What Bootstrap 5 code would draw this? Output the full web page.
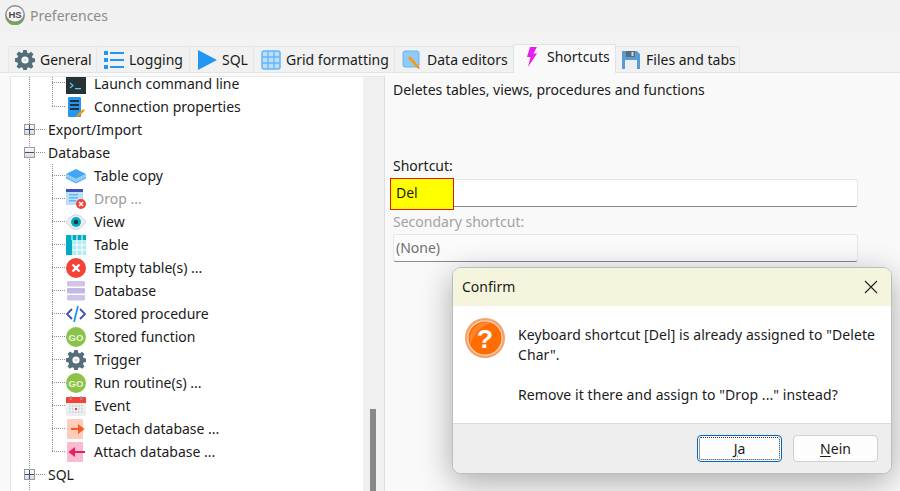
<!DOCTYPE html>
<html lang="en">
<head>
<meta charset="utf-8">
<title>Preferences</title>
<link href="https://cdn.jsdelivr.net/npm/bootstrap@5.3.0/dist/css/bootstrap.min.css" rel="stylesheet">
<style>
html,body{height:491px;overflow:hidden}
body{background:#f3f3f3;font-family:"Noto Sans","Open Sans",sans-serif;font-size:14px;color:#1b1b1b;line-height:20px;position:relative;width:900px}
.tbar{height:46px;padding:5px 0 0 5px;gap:5px;color:#8c8c8c;font-size:14px;background:linear-gradient(#f1f1f1 0,#f1f1f1 32px,#f3f3f3 34px)}
.tbar span{margin-top:1px}
.tabrow{height:26px;padding-left:8px;flex-wrap:nowrap;border:0}
.tabrow .nav-link{height:26px;border:1px solid #e6e6e6;border-bottom:0;border-radius:2px 2px 0 0;margin:0;padding:0 0 0 7px;color:#1b1b1b;background:#f1f1f1;display:flex;align-items:center;gap:5px;font-size:14px;line-height:20px;margin-right:-1px}
.tabrow .nav-link.active{height:29px;margin-top:-2px;background:#f9f9f9;border-color:#e2e2e2;padding-bottom:4px;position:relative;z-index:1;color:#1b1b1b}
.t1{width:89px}.t2{width:94px}.t3{width:65px}.t4{width:142px}.t5{width:120px}.t6{width:103px}.t7{width:125px}
.tabrow .t1{padding-left:6px}
.tabrow .t6{padding-left:12px;gap:9px}
.tabrow .t7{padding-left:5px}
.pane{height:419px;background:#f9f9f9;border-top:1px solid #e4e4e4}
.treebox{width:375px;height:416px;border-left:1px solid #e4e4e4;border-top:1px solid #e8e8e8;border-right:1px solid #dedede;flex:none;display:flex;background:#f0f0f0;margin:3px 0 0 10px}
.treewrap{width:352px;height:100%;background-color:#fff;flex:none;
 background-image:repeating-linear-gradient(#8e8e8e 0 1px,transparent 1px 2px);background-size:1px 100%;background-position:18px 0;background-repeat:no-repeat}
.trow{height:23px;display:flex;align-items:center;white-space:nowrap;line-height:16px}
.firstr{height:18px;align-items:flex-start}
.firstr .lbl{margin-top:-1px}
.firstr .cnn{background-position:0 0,0 5px}
.firstr .ficon{height:17px}
.lvl1{padding-left:13px}
.xbox{width:11px;height:11px;border:1px solid #9a9a9a;background:linear-gradient(#fafafa,#dcdcdc);flex:none;display:flex;align-items:center;justify-content:center}
.xbox svg{display:block}
.hdot{width:9px;height:1px;margin:0 3px 0 1px;background:repeating-linear-gradient(90deg,#8e8e8e 0 1px,transparent 1px 2px);flex:none}
.lvl2{padding-left:41px}
.cnn{width:14px;align-self:stretch;flex:none;
 background-image:repeating-linear-gradient(#8e8e8e 0 1px,transparent 1px 2px),repeating-linear-gradient(90deg,#8e8e8e 0 1px,transparent 1px 2px);
 background-size:1px 100%,100% 1px;background-position:0 0,0 11px;background-repeat:no-repeat}
.lastc{background-size:1px 12px,100% 1px}
.ficon{width:20px;height:20px;flex:none;display:block;margin-right:8px}
.off{color:#9a9a9a}
.scrollg{width:21px;flex:none;position:relative;background:#f0f0f0}
.thumb{position:absolute;left:7px;bottom:0;width:6px;height:83px;background:#888}
.detail{padding:7px 0 0 8px;width:480px}
.descr{height:76px}
.fldlabel{height:20px}
.fldgap1{margin-top:3px}
.fld{height:28px;width:465px;background:#fff;border:1px solid #e7e7e7;border-bottom:1px solid #8a8a8a;border-radius:3px;padding:0 0 0 2px;line-height:26px;position:relative}
.flag{position:absolute;left:-4px;top:-2px;width:64px;height:32px;background:#ffff00;border:1px solid #e81123;z-index:0}
.fldtxt{position:relative;z-index:1}
.muted1{color:#a3a3a3;margin-top:5px}
.nonetxt{color:#6f6f6f;margin-top:2px}
.f2{background:#fbfbfb}
.confirm{position:absolute;left:452px;top:267px;width:440px;height:207px;background:#fff;border:1px solid #bdbdbd;border-radius:9px;overflow:hidden;box-shadow:0 8px 32px rgba(0,0,0,.32);z-index:5}
.chead{height:38px;background:#f5f4dc;padding:0 9px 0 9px}
.cbody{height:118px;padding:12px 0 0 12px;gap:13px}
.ctext{padding-top:7px;letter-spacing:.07px}
.cfoot{height:50px;background:#eeeeee;border-top:1px solid #dcdcdc;padding:11px 13px 0 0;gap:11px}
.dbtn{width:85px;height:27px;padding:0;border:1px solid #d0d0d0;background:#fdfdfd;border-radius:4px;font-size:14px;line-height:24px;color:#1b1b1b;--bs-btn-hover-bg:#fdfdfd}
.dfirst{border-color:#0067c0;outline:1px dotted #333;outline-offset:-3px}
.dbtn u{text-underline-offset:2px}
.xclose{width:14px;height:14px;display:block}
.qicon{flex:none;display:block}
</style>
</head>
<body>
<svg width="0" height="0" class="d-none" aria-hidden="true"><defs>
<symbol id="gear" viewBox="0 0 20 20"><path fill="#546e7a" d="M8.300 0h3.400l.5 2.700 1.600.7 2.300-1.600 2.400 2.400-1.600 2.300.7 1.600 2.400.5v3.400l-2.400.5-.7 1.600 1.600 2.300-2.400 2.400-2.300-1.600-1.600.7-.5 2.400H8.300l-.5-2.400-1.600-.7-2.300 1.600-2.400-2.400 1.600-2.300-.7-1.600L0 11.700V8.300l2.400-.5.7-1.600-1.600-2.300 2.400-2.400 2.300 1.600 1.600-.7z"/><circle cx="10" cy="10" r="3.600" fill="#fff"/><circle cx="10" cy="10" r="1.600" fill="#546e7a" opacity=".25"/></symbol>
<symbol id="go" viewBox="0 0 20 20"><circle cx="10" cy="10" r="10" fill="#8bc34a"/><text x="10" y="13.500" text-anchor="middle" font-family="Liberation Sans,sans-serif" font-weight="700" font-size="9.500" fill="#e8f5d8">GO</text></symbol>
</defs></svg>

<div class="tbar d-flex align-items-start">
<svg width="20" height="20" viewBox="0 0 20 20"><circle cx="10" cy="10" r="10" fill="#8a8a8a"/><path d="M.5 11a9.500 9.500 0 0 0 19 0a9.500 7 0 0 1-19 0z" fill="#6cb33f"/><ellipse cx="10" cy="9" rx="8.500" ry="7.500" fill="#f5f5f5"/><text x="10" y="12.500" text-anchor="middle" font-family="Liberation Sans,sans-serif" font-weight="700" font-size="9.500" fill="#4a4a4a">HS</text></svg>
<span>Preferences</span>
</div>

<ul class="nav nav-tabs tabrow">
<li class="nav-item"><a class="nav-link t1" href="#"><svg width="20" height="20"><use href="#gear"/></svg>General</a></li>
<li class="nav-item"><a class="nav-link t2" href="#"><svg width="20" height="20" viewBox="0 0 20 20" fill="#2196f3"><rect x="0" y="1" width="4" height="4"/><rect x="0" y="8" width="4" height="4"/><rect x="0" y="15" width="4" height="4"/><rect x="6" y="2" width="14" height="2"/><rect x="6" y="9" width="14" height="2"/><rect x="6" y="16" width="14" height="2"/></svg>Logging</a></li>
<li class="nav-item"><a class="nav-link t3" href="#"><svg width="20" height="20" viewBox="0 0 20 20"><path fill="#2196f3" d="M1 0l19 10L1 20z"/></svg>SQL</a></li>
<li class="nav-item"><a class="nav-link t4" href="#"><svg width="20" height="20" viewBox="0 0 20 20"><rect x="1" y="1" width="18" height="18" rx="2" fill="#bbdefb" stroke="#64b5f6" stroke-width="1.500"/><path d="M7 1v18M13 1v18M1 7h18M1 13h18" stroke="#64b5f6" stroke-width="1.300"/></svg>Grid formatting</a></li>
<li class="nav-item"><a class="nav-link t5" href="#"><svg width="20" height="20" viewBox="0 0 20 20"><rect x="1" y="1" width="16" height="16" rx="2" fill="#90caf9" stroke="#64b5f6"/><path d="M6 8l9 10 2-1.500L8 6z" fill="#ff9800"/><path d="M15 18l2-1.500.8 2.500z" fill="#e57373"/></svg>Data editors</a></li>
<li class="nav-item"><a class="nav-link active t6" href="#"><svg width="12" height="20" viewBox="0 0 12 20"><path fill="#e81ef0" d="M4 0h7L7.500 6.500H11L2 20l2.500-10H1z"/></svg>Shortcuts</a></li>
<li class="nav-item"><a class="nav-link t7" href="#"><svg width="20" height="20" viewBox="0 0 20 20"><path fill="#5b9bd5" d="M1 1h15l3 3v15H1z"/><rect x="5" y="1" width="9" height="6" fill="#546e7a"/><rect x="10.500" y="2" width="2" height="4" fill="#cfd8dc"/><rect x="4" y="10" width="12" height="9" fill="#eceff1"/></svg>Files and tabs</a></li>
</ul>

<div class="pane d-flex">
<div class="treebox">
<div class="treewrap">
<div class="trow lvl2 firstr"><span class="cnn"></span><svg class="ficon" viewBox="0 0 20 17"><rect width="20" height="17" fill="#263238"/><path d="M4 6l3 2.500L4 11" fill="none" stroke="#4dd0e1" stroke-width="1.200"/><rect x="9" y="11" width="6" height="1.300" fill="#4dd0e1"/></svg><span class="lbl">Launch command line</span></div>
<div class="trow lvl2"><span class="cnn lastc"></span><svg class="ficon" viewBox="0 0 20 20"><rect x="2" y="0" width="13" height="20" rx="1" fill="#2196f3"/><path d="M4 3h9v2H4zM4 7h9v2H4zM4 11h9v2H4z" fill="#263238"/><path d="M10 19l7-7 2 1.500-7 6.500z" fill="#ff9800"/></svg>Connection properties</div>
<div class="trow lvl1"><span class="xbox"><svg width="9" height="9" viewBox="0 0 9 9"><path d="M0 4.500h9M4.500 0v9" stroke="#3d4f7c"/></svg></span><span class="hdot"></span>Export/Import</div>
<div class="trow lvl1"><span class="xbox"><svg width="9" height="9" viewBox="0 0 9 9"><path d="M0 4.500h9" stroke="#3d4f7c"/></svg></span><span class="hdot"></span>Database</div>
<div class="trow lvl2"><span class="cnn"></span><svg class="ficon" viewBox="0 0 20 20"><path d="M10 3l10 5-10 5L0 8z" fill="#42a5f5"/><path d="M0 10.500l10 5 10-5v2l-10 5-10-5z" fill="#64b5f6"/><path d="M0 8l10 5 10-5v2.500l-10 5-10-5z" fill="#90caf9"/></svg>Table copy</div>
<div class="trow lvl2 off"><span class="cnn"></span><svg class="ficon" viewBox="0 0 20 20"><rect y="0" width="17" height="16" fill="#bbdefb"/><rect y="0" width="17" height="3" fill="#3f51b5"/><path d="M3 5h9v1.500H3zM3 8h9v1.500H3zM3 11h7v1.500H3z" fill="#64b5f6"/><circle cx="15" cy="15" r="5" fill="#f44336"/><path d="M13 13l4 4M17 13l-4 4" stroke="#fff" stroke-width="1.500"/></svg>Drop ...</div>
<div class="trow lvl2"><span class="cnn"></span><svg class="ficon" viewBox="0 0 20 20"><path d="M0 10q10-15 20 0q-10 15-20 0z" fill="#eceff1" stroke="#b0bec5" stroke-width=".600"/><circle cx="10" cy="10" r="5" fill="#00acc1"/><circle cx="10" cy="10" r="2.200" fill="#263238"/></svg>View</div>
<div class="trow lvl2"><span class="cnn"></span><svg class="ficon" viewBox="0 0 20 20"><rect width="20" height="20" fill="#00acc1"/><rect x="6" y="5" width="14" height="15" fill="#b2ebf2"/><path d="M6 10h14M6 15h14M11 5v15M16 5v15M6 0v5M11 0v5M16 0v5" stroke="#fff"/></svg>Table</div>
<div class="trow lvl2"><span class="cnn"></span><svg class="ficon" viewBox="0 0 20 20"><circle cx="10" cy="10" r="10" fill="#f44336"/><path d="M6.500 6.500l7 7M13.500 6.500l-7 7" stroke="#fff" stroke-width="2.400"/></svg>Empty table(s) ...</div>
<div class="trow lvl2"><span class="cnn"></span><svg class="ficon" viewBox="0 0 20 20" fill="#d1c4e9"><rect x="1" y="0" width="18" height="5.500" rx="1"/><rect x="1" y="7" width="18" height="5.500" rx="1" fill="#c5b8e3"/><rect x="1" y="14" width="18" height="5.500" rx="1"/></svg>Database</div>
<div class="trow lvl2"><span class="cnn"></span><svg class="ficon" viewBox="0 0 20 20" fill="none" stroke-width="1.800"><path d="M6 5l-5 5 5 5M14 5l5 5-5 5" stroke="#3f51b5"/><path d="M12 2L8 18" stroke="#2196f3"/></svg>Stored procedure</div>
<div class="trow lvl2"><span class="cnn"></span><svg class="ficon"><use href="#go"/></svg>Stored function</div>
<div class="trow lvl2"><span class="cnn"></span><svg class="ficon"><use href="#gear"/></svg>Trigger</div>
<div class="trow lvl2"><span class="cnn"></span><svg class="ficon"><use href="#go"/></svg>Run routine(s) ...</div>
<div class="trow lvl2"><span class="cnn"></span><svg class="ficon" viewBox="0 0 20 20"><rect y="1" width="20" height="19" rx="1" fill="#eceff1"/><path d="M0 2a1 1 0 0 1 1-1h18a1 1 0 0 1 1 1v5H0z" fill="#f44336"/><rect x="4" y="0" width="1.500" height="4" fill="#90a4ae"/><rect x="14.500" y="0" width="1.500" height="4" fill="#90a4ae"/><path d="M3 10h14M3 13h14M3 16h14" stroke="#b0bec5" stroke-dasharray="1.500 1.500"/><rect x="9" y="12" width="2" height="2" fill="#f44336"/></svg>Event</div>
<div class="trow lvl2"><span class="cnn"></span><svg class="ficon" viewBox="0 0 20 20"><rect x="1" y="0" width="16" height="20" rx="1" fill="#ffccbc"/><path d="M5 10h11M13 7l4 3-4 3z" stroke="#ff5722" stroke-width="2" fill="#ff5722"/></svg>Detach database ...</div>
<div class="trow lvl2"><span class="cnn lastc"></span><svg class="ficon" viewBox="0 0 20 20"><rect x="1" y="0" width="16" height="20" rx="1" fill="#f8bbd0"/><path d="M7 10h12M8 7l-4 3 4 3z" stroke="#e91e63" stroke-width="2" fill="#e91e63"/></svg>Attach database ...</div>
<div class="trow lvl1"><span class="xbox"><svg width="9" height="9" viewBox="0 0 9 9"><path d="M0 4.500h9M4.500 0v9" stroke="#3d4f7c"/></svg></span><span class="hdot"></span>SQL</div>
</div>
<div class="scrollg"><div class="thumb"></div></div>
</div>

<div class="detail">
<div class="descr">Deletes tables, views, procedures and functions</div>
<div class="fldlabel">Shortcut:</div>
<div class="fld fldgap1"><span class="flag"></span><span class="fldtxt">Del</span></div>
<div class="fldlabel muted1">Secondary shortcut:</div>
<div class="fld f2 nonetxt">(None)</div>
</div>
</div>

<div class="confirm d-flex flex-column" role="dialog">
<div class="chead d-flex align-items-center justify-content-between"><span>Confirm</span>
<svg class="xclose me-1" viewBox="0 0 14 14"><path d="M1 1l12 12M13 1L1 13" stroke="#222" stroke-width="1.100"/></svg></div>
<div class="cbody d-flex">
<svg width="40" height="40" viewBox="0 0 42 42" class="qicon"><circle cx="21" cy="21" r="21" fill="#f4a26b"/><circle cx="21" cy="21" r="18" fill="#ff6d00" stroke="#fbd7bf" stroke-width="1.200"/><path d="M6 28a18 18 0 0 1 22-23a30 30 0 0 0-22 23z" fill="#fff" opacity=".18"/><text x="21" y="31" text-anchor="middle" font-family="Liberation Sans,sans-serif" font-weight="700" font-size="28" fill="#fff">?</text></svg>
<div class="ctext">Keyboard shortcut [Del] is already assigned to "Delete<br>Char".<br><br>Remove it there and assign to "Drop ..." instead?</div>
</div>
<div class="cfoot d-flex justify-content-end">
<button type="button" class="btn dbtn dfirst"><u>J</u>a</button>
<button type="button" class="btn dbtn"><u>N</u>ein</button>
</div>
</div>
</body>
</html>
